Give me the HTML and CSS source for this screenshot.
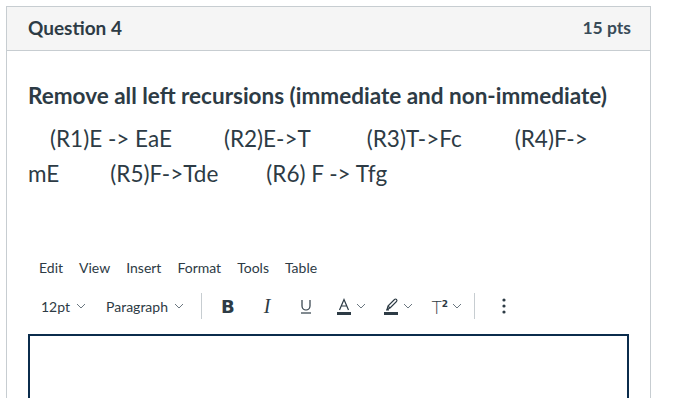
FILE: index.html
```html
<!DOCTYPE html>
<html>
  <head>
    <title>Question 4</title>
    <link rel="stylesheet" href="styles.css">
  </head>
  <body>
    <div class="question">
      <div class="question-header">
        <span class="question-name">Question 4</span>
        <span class="question-points">15 pts</span>
      </div>
      <div class="question-body">
        <h2 class="question-title">Remove all left recursions (immediate and non-immediate)</h2>
        <p class="rules"><span class="rule first">(R1)E -&gt; EaE</span><span class="rule g2">(R2)E-&gt;T</span><span class="rule g3">(R3)T-&gt;Fc</span><span class="rule g4">(R4)F-&gt;</span> <span class="rule">mE</span><span class="rule g5">(R5)F-&gt;Tde</span><span class="rule g6">(R6) F -&gt; Tfg</span></p>

        <div class="editor">
          <!-- menu bar -->
          <div class="menubar">
            <span>Edit</span>
            <span>View</span>
            <span>Insert</span>
            <span>Format</span>
            <span>Tools</span>
            <span>Table</span>
          </div>

          <!-- toolbar -->
          <div class="toolbar">
            <span class="tool select size">12pt
              <svg class="chev" width="10" height="6" viewBox="0 0 10 6"><polyline points="1,1 5,5 9,1" /></svg>
            </span>
            <span class="tool select">Paragraph
              <svg class="chev" width="10" height="6" viewBox="0 0 10 6"><polyline points="1,1 5,5 9,1" /></svg>
            </span>
            <span class="sep"></span>
            <span class="tool bold">B</span>
            <span class="tool italic">I</span>
            <span class="tool underline">
              <svg width="14" height="18" viewBox="0 0 14 18" fill="none" stroke="#2d3b45" stroke-width="1.2">
                <path d="M3 3v6a4 4 0 0 0 8 0V3" />
                <line x1="2" y1="16" x2="12" y2="16" />
              </svg>
            </span>
            <span class="tool color">
              <svg width="16" height="18" viewBox="0 0 16 18">
                <path d="M3.5 13L8 2.5 12.5 13M5.2 9h5.6" fill="none" stroke="#2d3b45" stroke-width="1.2" />
                <rect x="1" y="15" width="14" height="3" fill="#2d3b45" />
              </svg>
              <svg class="chev" width="10" height="6" viewBox="0 0 10 6"><polyline points="1,1 5,5 9,1" /></svg>
            </span>
            <span class="tool highlight">
              <svg width="16" height="18" viewBox="0 0 16 18">
                <path d="M4 12.5l1-3.5 6.5-6.5a1.4 1.4 0 0 1 2 2L7 11z M5 9l2 2 M3 13h3" fill="none" stroke="#2d3b45" stroke-width="1.1" stroke-linejoin="round" />
                <rect x="1" y="15" width="14" height="3" fill="#2d3b45" />
              </svg>
              <svg class="chev" width="10" height="6" viewBox="0 0 10 6"><polyline points="1,1 5,5 9,1" /></svg>
            </span>
            <span class="tool superscript">
              <span class="sup-icon">T<sup>2</sup></span>
              <svg class="chev" width="10" height="6" viewBox="0 0 10 6"><polyline points="1,1 5,5 9,1" /></svg>
            </span>
            <span class="sep last"></span>
            <span class="tool more">
              <svg width="4" height="16" viewBox="0 0 4 16" fill="#2d3b45">
                <circle cx="2" cy="2" r="1.6" />
                <circle cx="2" cy="8" r="1.6" />
                <circle cx="2" cy="14" r="1.6" />
              </svg>
            </span>
          </div>

          <div class="edit-area"></div>
        </div>
      </div>
    </div>
  </body>
</html>
```

FILE: styles.css
```css
body {
  margin: 0;
  background-color: #fff;
  font-family: Lato, "Open Sans", sans-serif;
  color: #2d3b45;
}

.question {
  box-sizing: border-box;
  width: 645px;
  height: 420px;
  margin: 6px 0 0 6px;
  border: 1px solid #c7cdd1;
  border-bottom: none;
}

.question-header {
  display: flex;
  justify-content: space-between;
  align-items: center;
  height: 41px;
  padding: 0 19px 2px 21px;
  background-color: #f5f5f5;
  border-bottom: 1px solid #c7cdd1;
}

.question-name {
  font-size: 19px;
  font-weight: bold;
}

.question-points {
  font-size: 17.5px;
  font-weight: bold;
  color: #394b58;
}

.question-body {
  padding: 0 21px;
}

.question-title {
  margin: 30px 0 0;
  font-size: 22.5px;
  font-weight: bold;
  line-height: 30px;
}

.rules {
  margin: 10px 0 0;
  font-size: 22.5px;
  line-height: 35px;
}

.rule.first { margin-left: 22px; }
.rule.g2 { margin-left: 52px; }
.rule.g3 { margin-left: 56px; }
.rule.g4 { margin-left: 53px; }
.rule.g5 { margin-left: 51px; }
.rule.g6 { margin-left: 48px; }

/* editor */
.editor {
  margin-top: 64px;
}

.menubar {
  display: flex;
  padding-left: 11px;
  font-size: 14px;
  height: 24px;
  align-items: center;
}

.menubar span {
  margin-right: 16px;
}

.toolbar {
  display: flex;
  align-items: center;
  height: 34px;
  margin-top: 10px;
  padding-left: 13px;
  font-size: 14px;
}

.tool {
  display: flex;
  align-items: center;
}

.select {
  margin-right: 15px;
}

.select.size {
  margin-right: 20px;
}

.chev {
  margin-left: 6px;
  fill: none;
  stroke: #6b7780;
  stroke-width: 1;
}

.sep {
  width: 1px;
  height: 26px;
  background-color: #c7cdd1;
  margin: 0 19px 0 2px;
}

.sep.last {
  margin: 0 27px 0 0;
}

.bold {
  font-family: "DejaVu Sans", sans-serif;
  font-weight: bold;
  font-size: 18px;
  margin-right: 29px;
}

.italic {
  font-family: "Liberation Serif", serif;
  font-style: italic;
  font-size: 20px;
  margin-right: 29px;
}

.underline {
  margin-right: 23px;
}

.color {
  margin-right: 17px;
}

.highlight {
  margin-right: 18px;
}

.superscript {
  margin-right: 12px;
}

.color .chev,
.highlight .chev,
.superscript .chev {
  margin-left: 4px;
}

.sup-icon {
  font-family: "DejaVu Sans", sans-serif;
  font-weight: 200;
  font-size: 17px;
  line-height: 18px;
}

.sup-icon sup {
  font-size: 9px;
  font-weight: bold;
  vertical-align: 7px;
}

.edit-area {
  box-sizing: border-box;
  height: 120px;
  margin-top: 11px;
  border: 2px solid #0b2c4c;
}
```
